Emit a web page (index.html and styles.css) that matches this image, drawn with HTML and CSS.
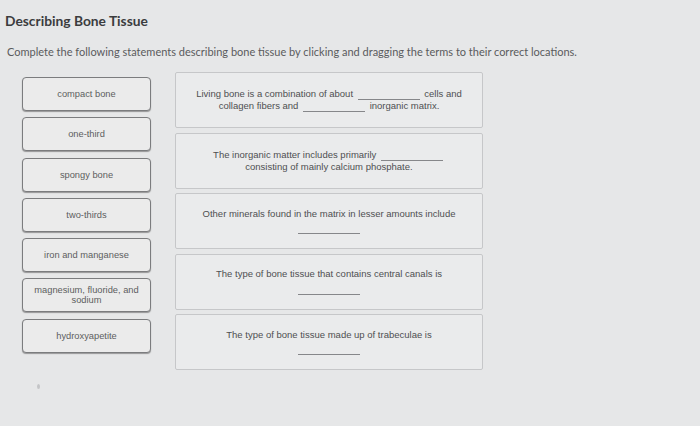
FILE: index.html
```html
<!DOCTYPE html>
<html lang="en">
<head>
<meta charset="utf-8">
<title>Describing Bone Tissue</title>
<link rel="stylesheet" href="styles.css">
</head>
<body>
<div class="page">
  <h1 class="title">Describing Bone Tissue</h1>
  <p class="intro">Complete the following statements describing bone tissue by clicking and dragging the terms to their correct locations.</p>
  <div class="activity">
    <div class="terms">
      <div class="term">compact bone</div>
      <div class="term">one-third</div>
      <div class="term">spongy bone</div>
      <div class="term">two-thirds</div>
      <div class="term">iron and manganese</div>
      <div class="term">magnesium, fluoride, and<br>sodium</div>
      <div class="term">hydroxyapetite</div>
    </div>
    <div class="statements">
      <div class="statement"><p>Living bone is a combination of about <span class="blank"></span> cells and<br>collagen fibers and <span class="blank"></span> inorganic matrix.</p></div>
      <div class="statement"><p>The inorganic matter includes primarily <span class="blank"></span><br>consisting of mainly calcium phosphate.</p></div>
      <div class="statement"><p>Other minerals found in the matrix in lesser amounts include<br><span class="blank blank-line"></span></p></div>
      <div class="statement"><p>The type of bone tissue that contains central canals is<br><span class="blank blank-line"></span></p></div>
      <div class="statement"><p>The type of bone tissue made up of trabeculae is<br><span class="blank blank-line"></span></p></div>
    </div>
  </div>
  <div class="footer"><span class="dot"></span></div>
</div>
</body>
</html>
```

FILE: styles.css
```css
html, body {
  margin: 0;
  padding: 0;
  background: #e6e7e8;
}
.page {
  width: 700px;
  height: 426px;
  padding: 13px 0 0 5px;
  box-sizing: border-box;
  font-family: Lato, "Open Sans", sans-serif;
}
.title {
  margin: 0;
  font-size: 13.8px;
  font-weight: 700;
  color: #3b3c3e;
  line-height: 16px;
}
.intro {
  margin: 16px 0 0 2px;
  font-size: 11px;
  color: #5a5b5d;
  line-height: 13px;
}
.activity {
  display: flex;
  align-items: flex-start;
  margin-top: 14px;
}
.terms {
  display: flex;
  flex-direction: column;
  gap: 6.3px;
  width: 129px;
  margin: 5px 0 0 17px;
}
.term {
  height: 34px;
  box-sizing: border-box;
  display: flex;
  align-items: center;
  justify-content: center;
  text-align: center;
  border: 1.5px solid #7b7c7e;
  border-radius: 4px;
  background: #ebebeb;
  box-shadow: 0 1px 1px rgba(0, 0, 0, 0.35);
  font-family: "Liberation Sans", Arial, sans-serif;
  font-size: 9.3px;
  line-height: 10px;
  color: #5d5e60;
}
.statements {
  display: flex;
  flex-direction: column;
  gap: 4.5px;
  width: 308px;
  margin-left: 24px;
}
.statement {
  height: 56px;
  box-sizing: border-box;
  display: flex;
  align-items: center;
  justify-content: center;
  border: 1px solid #c6c7c9;
  border-radius: 2px;
  background: #eaebec;
  font-family: "Liberation Sans", Arial, sans-serif;
  font-size: 9.5px;
  color: #4e4f51;
}
.statement p {
  margin: 0;
  text-align: center;
  line-height: 11.5px;
}
.blank {
  display: inline-block;
  width: 62px;
  height: 9px;
  border-bottom: 1px solid #86878a;
  vertical-align: -3px;
  margin: 0 2px;
}
.blank-line {
  margin-top: 5px;
}
.footer {
  padding: 14px 0 0 32px;
}
.dot {
  display: block;
  width: 3px;
  height: 5px;
  border-radius: 50%;
  background: #c4c5c7;
}
```
